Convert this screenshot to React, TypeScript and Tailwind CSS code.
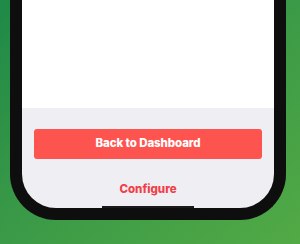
export default function App() {
  return (
    <div
      className="relative w-[300px] h-[244px] overflow-hidden bg-gradient-to-br from-[#1d8a47] to-[#52aa45]"
      style={{ fontFamily: 'Inter, "Noto Sans", sans-serif' }}
    >
      <div className="ml-[10px] w-[276px] h-[220px] border-x-[12px] border-b-[12px] border-[#0e0e0e] rounded-b-[46px] bg-[#0e0e0e]">
        <div className="relative flex flex-col h-full rounded-b-[34px] overflow-hidden bg-[#efeef2]">
          <div className="h-[108px] bg-white" />
          <div className="flex flex-col items-center px-[12px] pt-[21px]">
            <button className="w-full h-[30px] rounded-[3px] bg-[#fd5450] text-white text-[11.5px] font-extrabold tracking-[-0.1px]">
              Back to Dashboard
            </button>
            <span className="mt-[22px] text-[11.5px] leading-[16px] font-extrabold text-[#f0404a]">
              Configure
            </span>
          </div>
          <div className="absolute bottom-0 left-[80px] w-[92px] h-[2px] bg-[#1a1a1a]" />
        </div>
      </div>
    </div>
  );
}
